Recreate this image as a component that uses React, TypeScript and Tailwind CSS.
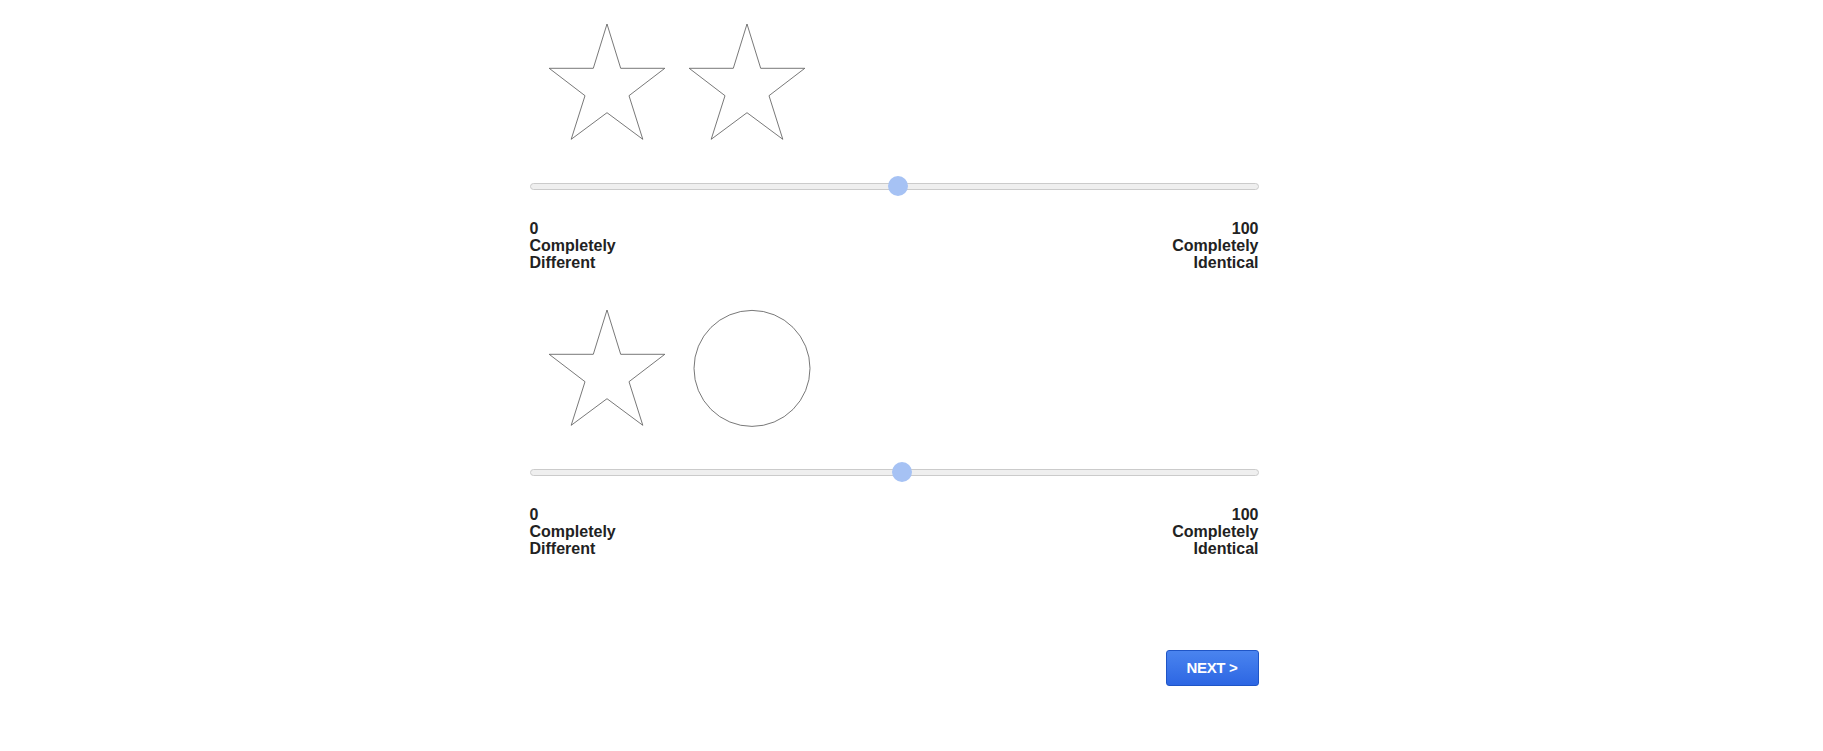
import React from 'react';

type Shape = 'star' | 'circle';

const QUESTIONS: { id: number; shapes: Shape[]; value: number }[] = [
  { id: 1, shapes: ['star', 'star'], value: 50.53 },
  { id: 2, shapes: ['star', 'circle'], value: 51.12 },
];

const STAR_POINTS =
  '60,2 73.7,46.3 117.8,46.3 82,73.7 95.8,117.3 60,90.7 24.2,117.3 38,73.7 2.2,46.3 46.3,46.3';

function ShapeImage({ shape }: { shape: Shape }) {
  return (
    <svg width="120" height="120" viewBox="0 0 120 120" className="shrink-0">
      {shape === 'star' ? (
        <polygon points={STAR_POINTS} fill="none" stroke="#555" strokeWidth="0.8" strokeLinejoin="miter" />
      ) : (
        <circle cx="60" cy="60.4" r="58" fill="none" stroke="#555" strokeWidth="0.8" />
      )}
    </svg>
  );
}

function Slider({ value }: { value: number }) {
  return (
    <div className="relative h-[20px] flex items-center">
      <div className="h-[7px] w-full rounded-full border border-[#cbcbcb] bg-[#efefef]" />
      <div
        className="absolute top-0 h-[20px] w-[20px] rounded-full bg-[#a6c2f4]"
        style={{ left: `calc(${value}% - 10px)` }}
      />
    </div>
  );
}

function Question({ shapes, value }: { shapes: Shape[]; value: number }) {
  return (
    <div>
      {/* Shapes */}
      <div className="flex h-[120px] pl-[17px]">
        <ShapeImage shape={shapes[0]} />
        <div className={shapes[1] === 'circle' ? 'ml-[25px]' : 'ml-[20px]'}>
          <ShapeImage shape={shapes[1]} />
        </div>
      </div>

      <div className="mt-[34px]">
        <Slider value={value} />
      </div>

      {/* Labels */}
      <div className="mt-[24px] flex justify-between text-[16px] font-bold leading-[17px] text-[#222]">
        <div>
          <div>0</div>
          <div>Completely</div>
          <div>Different</div>
        </div>
        <div className="text-right">
          <div>100</div>
          <div>Completely</div>
          <div>Identical</div>
        </div>
      </div>
    </div>
  );
}

export default function App() {
  return (
    <div
      className="min-h-screen bg-white"
      style={{ fontFamily: '"Liberation Sans", Arial, Helvetica, sans-serif' }}
    >
      <div className="flex justify-center pr-[35px] pt-[22px]">
        <div className="w-[729px]">
          <div className="flex flex-col gap-[37px]">
            {QUESTIONS.map((q) => (
              <Question key={q.id} shapes={q.shapes} value={q.value} />
            ))}
          </div>

          <div className="mt-[93px] flex justify-end">
            <button className="h-[36px] w-[93px] rounded-[3px] border border-[#1f55c6] bg-gradient-to-b from-[#4a84ef] to-[#2d66e3] text-[15px] font-bold tracking-[-0.3px] text-white">
              NEXT &gt;
            </button>
          </div>
        </div>
      </div>
    </div>
  );
}
